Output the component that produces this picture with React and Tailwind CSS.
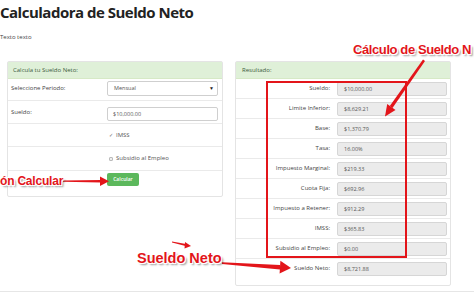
export default function App() {
  const rows = [
    ["Sueldo:", "$10,000.00"],
    ["Limite Inferior:", "$8,629.21"],
    ["Base:", "$1,370.79"],
    ["Tasa:", "16.00%"],
    ["Impuesto Marginal:", "$219.33"],
    ["Cuota Fija:", "$692.96"],
    ["Impuesto a Retener:", "$912.29"],
    ["IMSS:", "$365.83"],
    ["Subsidio al Empleo:", "$0.00"],
    ["Sueldo Neto:", "$8,721.88"],
  ];
  const redText =
    "absolute whitespace-nowrap font-bold text-[#e3151a] [font-family:'Liberation_Sans',Arial,sans-serif] [text-shadow:1px_1px_0_#fff,-1px_-1px_0_#fff,1px_-1px_0_#fff,-1px_1px_0_#fff,2px_2px_2px_rgba(0,0,0,0.45)]";
  return (
    <div className="relative w-[474px] h-[296px] overflow-hidden bg-white text-[#333] [font-family:'Open_Sans',sans-serif]">
      <div className="pt-[3px] text-[15px] font-bold leading-[19px] tracking-[-0.5px] text-[#222]">
        Calculadora de Sueldo Neto
      </div>
      <div className="mt-[11px] text-[6px] leading-[8px] text-[#444]">Texto texto</div>

      <div className="mt-[20px] flex items-start">
        {/* Left panel */}
        <div className="ml-[7px] w-[216px] rounded-[2px] border border-[#e4e4e4]">
          <div className="flex h-[17px] items-center border-b border-[#d6e9c6] bg-[#dff0d8] pl-[5px] text-[6px] text-[#3c5a3c]">
            Calcula tu Sueldo Neto:
          </div>
          <div className="flex h-[22px] border-b border-[#eaeaea]">
            <div className="w-[99px] pl-[3px] pt-[5px] text-[6px] leading-[8px] text-[#444]">Seleccione Periodo:</div>
            <div className="mt-[2px] flex h-[15px] w-[111px] items-center justify-between rounded-[2px] border border-[#cfcfcf] bg-white pl-[6px] pr-[3px] text-[5.5px] text-[#555]">
              <span>Mensual</span>
              <span className="text-[5px] text-[#222]">▼</span>
            </div>
          </div>
          <div className="flex h-[23px] border-b border-[#eaeaea]">
            <div className="w-[99px] pl-[3px] pt-[7px] text-[6px] leading-[8px] text-[#444]">Sueldo:</div>
            <div className="mt-[6px] flex h-[14px] w-[111px] items-center rounded-[2px] border border-[#cfcfcf] bg-white pl-[5px] text-[5.5px] text-[#555]">
              $10,000.00
            </div>
          </div>
          <div className="flex h-[23px] items-center border-b border-[#eaeaea]">
            <div className="w-[99px]" />
            <div className="flex items-center gap-[3px] pl-[2px] text-[6px] text-[#555]">
              <span className="flex h-[4px] w-[4px] items-center justify-center text-[5px] leading-none text-[#666]">✓</span>
              <span>IMSS</span>
            </div>
          </div>
          <div className="flex h-[24px] items-center border-b border-[#eaeaea]">
            <div className="w-[99px]" />
            <div className="flex items-center gap-[3px] pl-[2px] text-[6px] text-[#555]">
              <span className="h-[4px] w-[4px] rounded-[1px] border border-[#bbb] bg-[#eee]" />
              <span>Subsidio al Empleo</span>
            </div>
          </div>
          <div className="flex h-[25px]">
            <div className="w-[99px]" />
            <div className="mt-[2px] flex h-[13px] w-[32px] items-center justify-center rounded-[2px] bg-[#5cb85c] text-[5px] font-semibold text-white">
              Calcular
            </div>
          </div>
        </div>

        {/* Right panel */}
        <div className="ml-[12px] w-[216px] rounded-[2px] border border-[#e4e4e4] pb-[6px]">
          <div className="flex h-[17px] items-center border-b border-[#d6e9c6] bg-[#dff0d8] pl-[6px] text-[6px] text-[#3c5a3c]">
            Resultado:
          </div>
          <div className="divide-y divide-[#eaeaea]">
            {rows.map(([l, v]) => (
              <div key={l} className="flex h-[20px] items-start">
                <div className="w-[98px] pr-[4px] pt-[5px] text-right text-[6px] leading-[8px] text-[#444]">{l}</div>
                <div className="ml-[3px] mt-[3px] flex h-[14px] w-[110px] items-center rounded-[2px] border border-[#d6d6d6] bg-[#ebebeb] pl-[6px] text-[5.5px] text-[#555]">
                  {v}
                </div>
              </div>
            ))}
          </div>
        </div>
      </div>
      <div className="mt-[5px] h-px w-full bg-[#e6e6e6]" />

      {/* Annotations */}
      <div className="absolute left-[266px] top-[81px] h-[177px] w-[141px] border-2 border-[#e3151a]" />
      <svg className="pointer-events-none absolute left-0 top-0" width="474" height="296" viewBox="0 0 474 296">
        <g fill="#e3151a" stroke="none">
          <polygon points="63,180.5 101,180 101,182.5 63,181.8" />
          <polygon points="100,176.5 109,181.2 100,186" />
          <polygon points="172,241.5 186,244 185.5,246 172,242.5" />
          <polygon points="185,242 191,246 184.5,248.5" />
          <polygon points="222,262.3 280,265 280,269.5 222,264" />
          <polygon points="280.4,260.8 291,268 279.6,273.4" />
          <polygon points="423,59.5 425,61 392.5,108 389.8,106" />
          <polygon points="395.5,110 385,116.5 387.2,104" />
        </g>
      </svg>
      <div className={`${redText} left-[353px] top-[43px] text-[13px] leading-[14px] tracking-[-0.4px]`}>
        Cálculo de Sueldo N
      </div>
      <div className={`${redText} left-[0px] top-[174px] text-[12px] leading-[14px] tracking-[-0.2px]`}>ón Calcular</div>
      <div className={`${redText} left-[137px] top-[250px] text-[14.5px] leading-[16px]`}>Sueldo Neto</div>
    </div>
  );
}
